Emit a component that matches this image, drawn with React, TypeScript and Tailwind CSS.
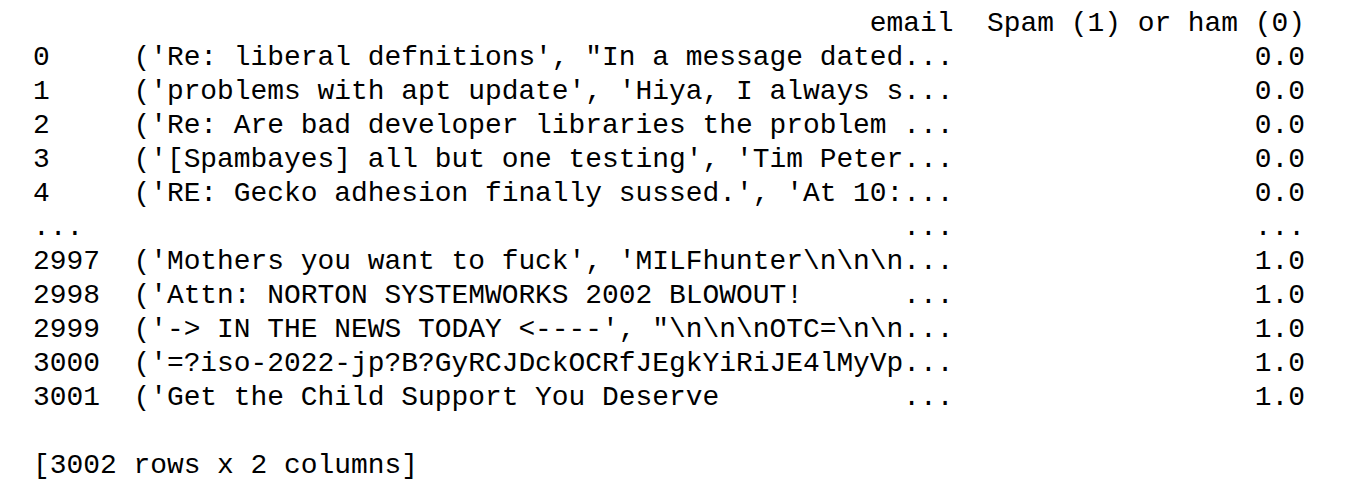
const rows: [string, string, string][] = [
  ['0', `('Re: liberal defnitions', "In a message dated...`, '0.0'],
  ['1', `('problems with apt update', 'Hiya, I always s...`, '0.0'],
  ['2', `('Re: Are bad developer libraries the problem ...`, '0.0'],
  ['3', `('[Spambayes] all but one testing', 'Tim Peter...`, '0.0'],
  ['4', `('RE: Gecko adhesion finally sussed.', 'At 10:...`, '0.0'],
  ['...', '...', '...'],
  ['2997', `('Mothers you want to fuck', 'MILFhunter\\n\\n\\n...`, '1.0'],
  ['2998', `('Attn: NORTON SYSTEMWORKS 2002 BLOWOUT!      ...`, '1.0'],
  ['2999', `('-> IN THE NEWS TODAY <----', "\\n\\n\\nOTC=\\n\\n...`, '1.0'],
  ['3000', `('=?iso-2022-jp?B?GyRCJDckOCRfJEgkYiRiJE4lMyVp...`, '1.0'],
  ['3001', `('Get the Child Support You Deserve           ...`, '1.0'],
];

const formatRow = ([idx, email, label]: [string, string, string]) =>
  idx.padEnd(4) + '  ' + email.padStart(49) + '  ' + label.padStart(19);

const App = () => {
  const header = ' '.repeat(50) + 'email' + '  ' + 'Spam (1) or ham (0)';

  return (
    <div className="w-[1358px] h-[486px] bg-white overflow-hidden">
      <pre className="pl-[33px] pt-[7px] text-[27.9px] leading-[34px] text-black font-['Liberation_Mono',monospace] whitespace-pre">
        <div>{header}</div>
        {rows.map((row) => (
          <div key={row[0] + row[1]}>{formatRow(row)}</div>
        ))}
        <div>{' '}</div>
        <div>[3002 rows x 2 columns]</div>
      </pre>
    </div>
  );
};

export default App;
